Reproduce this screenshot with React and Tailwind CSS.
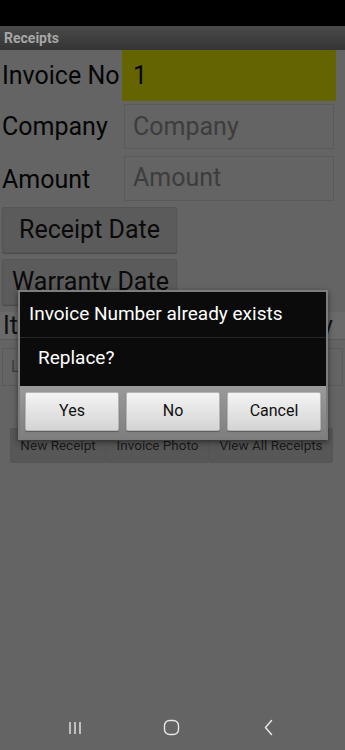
import React from 'react';

const font = { fontFamily: 'Roboto, "Noto Sans", sans-serif' };

function Field({ hint, value, yellow }) {
  if (yellow) {
    return (
      <div className="flex-1 h-full bg-[#646400] flex items-center pl-[11px] text-[25px] text-[#050505]">
        {value}
      </div>
    );
  }
  return (
    <div className="flex-1 h-[45px] mx-[2px] border border-[#5a5a5a] bg-[#646464] flex items-center pl-[8px] text-[25px] text-[#3d3d3d]">
      {hint}
    </div>
  );
}

function GrayButton({ children, className }) {
  return (
    <div className={`bg-[#5b5b5b] border border-[#555] rounded-[2px] shadow-[0_1px_1px_rgba(0,0,0,0.25)] flex items-center justify-center text-[#0a0a0a] ${className}`}>
      {children}
    </div>
  );
}

function DialogButton({ children }) {
  return (
    <div className="h-[39px] flex-1 bg-gradient-to-b from-[#f4f4f4] to-[#d4d4d4] border border-[#b5b5b5] rounded-[2px] shadow-[0_1px_1px_rgba(0,0,0,0.3)] flex items-center justify-center text-[16px] text-[#111]">
      {children}
    </div>
  );
}

export default function App() {
  return (
    <div className="relative w-[345px] h-[750px] overflow-hidden bg-[#646464] flex flex-col" style={font}>
      {/* status bar */}
      <div className="h-[26px] bg-black shrink-0" />

      {/* title */}
      <div className="h-[24px] bg-gradient-to-b from-[#4a4a4a] to-[#353535] flex items-center pl-[4px] text-[14px] font-bold text-[#a6a6a6]">
        Receipts
      </div>

      {/* form */}
      <div className="flex flex-col">
        <div className="h-[51px] flex items-center">
          <span className="w-[122px] pl-[2px] text-[25px] text-[#050505]">Invoice No</span>
          <div className="h-full w-[214px] flex">
            <Field yellow value="1" />
          </div>
        </div>
        <div className="h-[51px] flex items-center">
          <span className="w-[122px] pl-[2px] text-[25px] text-[#050505]">Company</span>
          <div className="w-[214px] flex">
            <Field hint="Company" />
          </div>
        </div>
        <div className="h-[52px] flex items-center">
          <span className="w-[122px] pl-[2px] text-[25px] text-[#050505] pt-[4px]">Amount</span>
          <div className="w-[214px] flex">
            <Field hint="Amount" />
          </div>
        </div>

        <div className="pl-[2px] pt-[3px] flex flex-col gap-[6px]">
          <GrayButton className="w-[175px] h-[46px] text-[25px]">Receipt Date</GrayButton>
          <GrayButton className="w-[175px] h-[46px] text-[25px] justify-start pl-[9px]">Warranty Date</GrayButton>
        </div>

        <div className="mt-[7px] h-[28px] bg-[#6a6a6a] border-b border-[#5a5a5a] flex items-center pl-[3px] text-[25px] text-[#111] whitespace-nowrap overflow-hidden">
          Items on Receipt for Warranty
        </div>

        <div className="mt-[8px] mx-[2px] h-[38px] border border-[#5a5a5a] flex items-center pl-[8px] text-[16px] text-[#3d3d3d]">
          List of items
        </div>

        <div className="mt-[42px] ml-[10px] mr-[12px] flex">
          <GrayButton className="w-[96px] h-[35px] text-[13.5px] text-[#1a1a1a] bg-[#575757] shadow-none">New Receipt</GrayButton>
          <GrayButton className="w-[103px] h-[35px] text-[13.5px] text-[#1a1a1a] bg-[#575757] shadow-none">Invoice Photo</GrayButton>
          <GrayButton className="flex-1 h-[35px] text-[13.5px] text-[#1a1a1a] bg-[#575757] shadow-none">View All Receipts</GrayButton>
        </div>
      </div>

      {/* nav bar */}
      <div className="mt-auto h-[45px] flex items-center pl-[26px] text-[#e6e6e6]">
        <div className="w-[97px] flex justify-center">
          <svg width="16" height="14" viewBox="0 0 16 14">
            <path d="M3 1v12M8 1v12M13 1v12" stroke="currentColor" strokeWidth="1.4" fill="none" />
          </svg>
        </div>
        <div className="w-[97px] flex justify-center">
          <svg width="17" height="17" viewBox="0 0 17 17">
            <rect x="1.5" y="1.5" width="14" height="14" rx="5" stroke="currentColor" strokeWidth="1.4" fill="none" />
          </svg>
        </div>
        <div className="w-[97px] flex justify-center">
          <svg width="11" height="17" viewBox="0 0 11 17">
            <path d="M8.5 1.5L2.5 8.5l6 7" stroke="currentColor" strokeWidth="1.5" fill="none" strokeLinecap="round" strokeLinejoin="round" />
          </svg>
        </div>
      </div>

      {/* dialog */}
      <div className="absolute left-[18px] top-[290px] w-[310px] h-[150px] bg-[#7d7d7d] p-[2px] shadow-[0_2px_6px_rgba(0,0,0,0.5)] flex flex-col">
        <div className="bg-[#0b0b0b] h-[94px] flex flex-col">
          <div className="h-[46px] border-b border-[#262626] flex items-center pl-[9px] text-[19px] text-white">
            Invoice Number already exists
          </div>
          <div className="flex-1 flex items-center pl-[18px] pb-[7px] text-[19px] text-white">
            Replace?
          </div>
        </div>
        <div className="flex-1 bg-gradient-to-b from-[#9a9a9a] to-[#7f7f7f] flex items-center gap-[7px] px-[5px] pb-[2px]">
          <DialogButton>Yes</DialogButton>
          <DialogButton>No</DialogButton>
          <DialogButton>Cancel</DialogButton>
        </div>
      </div>
    </div>
  );
}
